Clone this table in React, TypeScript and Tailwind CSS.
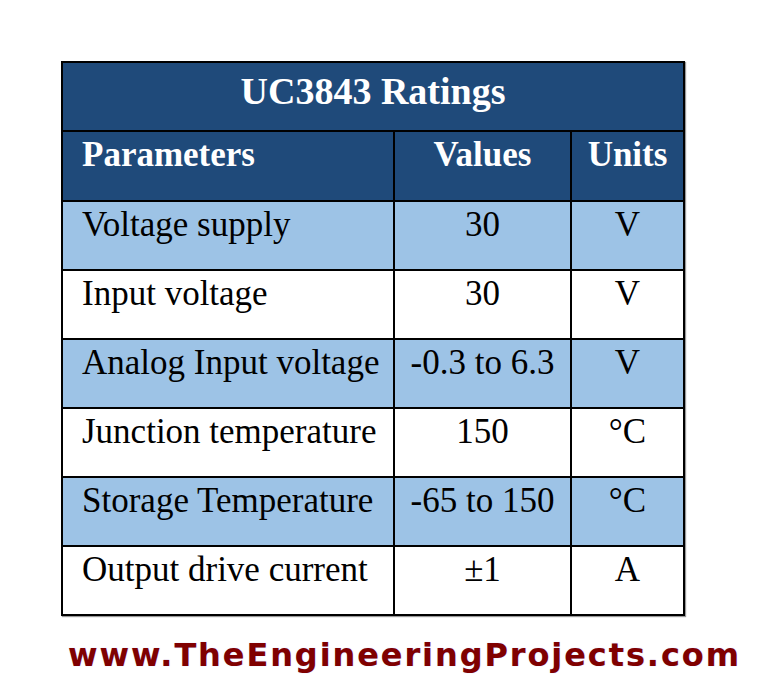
import React from "react";

const rows = [
  { p: "Voltage supply", v: "30", u: "V", shade: true },
  { p: "Input voltage", v: "30", u: "V", shade: false },
  { p: "Analog Input voltage", v: "-0.3 to 6.3", u: "V", shade: true },
  { p: "Junction temperature", v: "150", u: "°C", shade: false },
  { p: "Storage Temperature", v: "-65 to 150", u: "°C", shade: true },
  { p: "Output drive current", v: "±1", u: "A", shade: false },
];

export default function App() {
  return (
    <div className="w-[768px] h-[689px] bg-white flex flex-col items-start pt-[61px] pl-[61px] overflow-hidden">
      <table className="border-collapse border-2 border-black text-black [font-family:'Liberation_Serif',serif] shadow-[1px_1px_1px_rgba(0,0,0,0.4)]">
        <thead>
          <tr className="h-[69px] bg-[#1f4a7a]">
            <th colSpan={3} className="border-2 border-black align-top pt-[6px] text-center text-white text-[38px] leading-[44px] font-bold">
              UC3843 Ratings
            </th>
          </tr>
          <tr className="h-[70px] bg-[#1f4a7a] text-white text-[35px] leading-[42px] font-bold">
            <th className="w-[332px] border-2 border-black align-top pt-[2px] pl-[19px] text-left">Parameters</th>
            <th className="w-[177px] border-2 border-black align-top pt-[2px] text-center">Values</th>
            <th className="w-[113px] border-2 border-black align-top pt-[2px] text-center">Units</th>
          </tr>
        </thead>
        <tbody className="text-[35px] leading-[42px]">
          {rows.map((r) => (
            <tr key={r.p} className={`h-[69px] ${r.shade ? "bg-[#9dc3e6]" : "bg-white"}`}>
              <td className="border-2 border-black align-top pt-[2px] pl-[19px] whitespace-nowrap">{r.p}</td>
              <td className="border-2 border-black align-top pt-[2px] text-center whitespace-nowrap">{r.v}</td>
              <td className="border-2 border-black align-top pt-[2px] text-center">{r.u}</td>
            </tr>
          ))}
        </tbody>
      </table>
      <div className="mt-[19px] ml-[7px] text-[#800000] [font-family:'DejaVu_Sans',sans-serif] font-bold text-[32px] leading-[40px] tracking-[1.9px] [text-shadow:0_0_1px_rgba(120,120,255,0.5)]">
        www.TheEngineeringProjects.com
      </div>
    </div>
  );
}
